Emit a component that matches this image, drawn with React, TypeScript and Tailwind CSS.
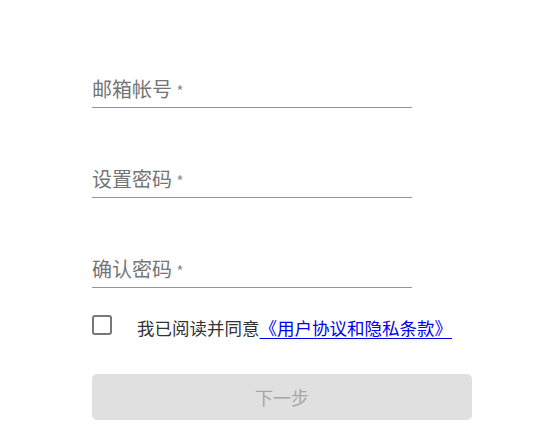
import React from "react";

const font = { fontFamily: '"Noto Sans CJK SC", "Noto Sans", sans-serif' };

function Field({ label, first }: { label: string; first?: boolean }) {
  return (
    <div
      className={`w-[320px] border-b border-[#949494] pb-[8px] ${first ? "" : "mt-[61px]"}`}
    >
      <div className="h-[20px] text-[20px] leading-[20px] text-[#757575] whitespace-nowrap">
        {label} <span className="text-[15px] leading-[0] text-[#8a8a8a]">*</span>
      </div>
    </div>
  );
}

export default function App() {
  return (
    <div className="w-[533px] h-[443px] bg-white pl-[92px] pt-[79px]" style={font}>
      <Field label="邮箱帐号" first />
      <Field label="设置密码" />
      <Field label="确认密码" />
      <div className="mt-[27px] flex items-start h-[23px]">
        <div className="w-[20px] h-[20px] border-2 border-[#777777] rounded-[3px]" />
        <div className="ml-[25px] mt-[2px] text-[17.5px] leading-[22px] text-[#333333] whitespace-nowrap">
          我已阅读并同意
          <a className="text-[#0000ee] underline underline-offset-[3px]" href="#">
            《用户协议和隐私条款》
          </a>
        </div>
      </div>
      <button className="mt-[36px] w-[380px] h-[46px] bg-[#e0e0e0] rounded-[5px] text-[18px] text-[#a6a6a6] flex items-center justify-center">
        下一步
      </button>
    </div>
  );
}
